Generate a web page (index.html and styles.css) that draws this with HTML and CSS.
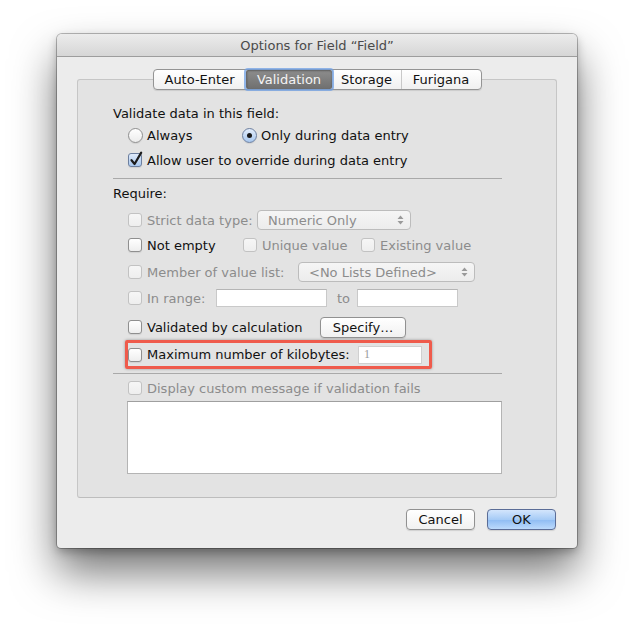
FILE: index.html
```html
<!DOCTYPE html>
<html>
<head>
<meta charset="utf-8">
<link rel="stylesheet" href="styles.css">
</head>
<body>
<div class="page">
  <div class="window">
    <div class="titlebar">Options for Field “Field”</div>
    <div class="body">
      <div class="tabs">
        <div class="seg">
          <span class="tab w1">Auto-Enter</span><span class="tab w2 sel">Validation</span><span class="tab w3">Storage</span><span class="tab w4">Furigana</span>
        </div>
      </div>
      <div class="group">
        <div class="row">Validate data in this field:</div>
        <div class="row ind r2">
          <span class="opt o-always"><span class="rb"></span>Always</span>
          <span class="opt"><span class="rb on"><span class="dot"></span></span>Only during data entry</span>
        </div>
        <div class="row ind r3">
          <span class="cb on"><svg class="check" width="14" height="16" viewBox="0 0 14 16"><path d="M2.5 9.2 L5.6 13 L12.2 1.6" fill="none" stroke="#1d1d1d" stroke-width="2.2" stroke-linecap="round" stroke-linejoin="round"/></svg></span>Allow user to override during data entry
        </div>
        <div class="sep s1"></div>
        <div class="row r-req">Require:</div>
        <div class="row ind r-strict dis">
          <span class="opt o-strict"><span class="cb dis"></span>Strict data type:</span>
          <span class="popup p-strict"><span>Numeric Only</span><svg class="arr" width="7" height="10" viewBox="0 0 7 10"><path d="M3.5 0.5 L6.5 4 L0.5 4Z M3.5 9.5 L6.5 6 L0.5 6Z" fill="#9a9a9a"/></svg></span>
        </div>
        <div class="row ind r-empty">
          <span class="opt o-empty"><span class="cb"></span>Not empty</span>
          <span class="opt o-unique dis"><span class="cb dis"></span>Unique value</span>
          <span class="opt dis"><span class="cb dis"></span>Existing value</span>
        </div>
        <div class="row ind r-member dis">
          <span class="opt o-member"><span class="cb dis"></span>Member of value list:</span>
          <span class="popup p-member"><span>&lt;No Lists Defined&gt;</span><svg class="arr" width="7" height="10" viewBox="0 0 7 10"><path d="M3.5 0.5 L6.5 4 L0.5 4Z M3.5 9.5 L6.5 6 L0.5 6Z" fill="#9a9a9a"/></svg></span>
        </div>
        <div class="row ind r-range dis">
          <span class="opt o-range"><span class="cb dis"></span>In range:</span>
          <span class="field f-range"></span>
          <span class="to">to</span>
          <span class="field f-range2"></span>
        </div>
        <div class="row ind r-calc">
          <span class="opt o-calc"><span class="cb"></span>Validated by calculation</span>
          <span class="btn b-spec">Specify…</span>
        </div>
        <div class="hl">
          <div class="row r-max">
            <span class="opt o-max"><span class="cb"></span>Maximum number of kilobytes:</span>
            <span class="field f-max">1</span>
          </div>
        </div>
        <div class="sep s2"></div>
        <div class="row ind r-disp dis">
          <span class="opt"><span class="cb dis"></span>Display custom message if validation fails</span>
        </div>
        <div class="textarea"></div>
      </div>
      <div class="buttons">
        <span class="btn b-cancel">Cancel</span>
        <span class="btn b-ok">OK</span>
      </div>
    </div>
  </div>
</div>
</body>
</html>
```

FILE: styles.css
```css
html, body {
  margin: 0;
  padding: 0;
  background: #ffffff;
}
body {
  font-family: "DejaVu Sans", sans-serif;
  font-size: 13px;
  color: #111;
}
.page {
  padding: 34px 0 0 57px;
  height: 628px;
  box-sizing: border-box;
}
.window {
  width: 520px;
  height: 514px;
  box-sizing: border-box;
  background: #ececec;
  border-radius: 5px 5px 4px 4px;
  box-shadow: 0 0 0 1px rgba(0,0,0,0.26), 0 24px 44px rgba(0,0,0,0.55), 0 4px 10px rgba(0,0,0,0.25);
  overflow: hidden;
}
.titlebar {
  height: 23px;
  box-sizing: border-box;
  background: linear-gradient(#ececec, #d6d6d6);
  border-bottom: 1px solid #9d9d9d;
  text-align: center;
  line-height: 23px;
  color: #4a4a4a;
  font-size: 13px;
}
.body {
  padding-top: 12px;
}
.tabs {
  display: flex;
  justify-content: center;
  position: relative;
  z-index: 1;
  margin-bottom: -11px;
}
.seg {
  display: flex;
  height: 21px;
  box-sizing: border-box;
  border: 1px solid #949494;
  border-radius: 4px;
  background: linear-gradient(#ffffff, #f0f0f0);
  box-shadow: 0 1px 1px rgba(0,0,0,0.1);
}
.tab {
  display: flex;
  align-items: center;
  justify-content: center;
  height: 19px;
  border-left: 1px solid #c9c9c9;
  color: #111;
}
.tab.w1 { width: 92px; border-left: none; border-radius: 3px 0 0 3px; }
.tab.w2 { width: 85px; }
.tab.w3 { width: 68px; }
.tab.w4 { width: 79px; border-radius: 0 3px 3px 0; }
.tab.sel {
  background: linear-gradient(#8e8e8e, #6f6f6f);
  color: #f4f4f4;
  border-left-color: #6a6a6a;
  box-shadow: inset 0 1px 2px rgba(0,0,0,0.35), 0 0 0 2px rgba(112,160,228,0.75);
  border-radius: 2px;
  position: relative;
}
.group {
  margin: 0 20px;
  height: 419px;
  box-sizing: border-box;
  border: 1px solid #c6c6c6;
  border-bottom-color: #bdbdbd;
  border-radius: 3px;
  background: #e3e3e3;
  padding: 23px 54px 0 35px;
}
.row {
  display: flex;
  align-items: center;
  height: 20px;
  white-space: nowrap;
}
.ind { padding-left: 15px; }
.r2 { margin-top: 2px; }
.r3 { margin-top: 5px; }
.sep {
  height: 1px;
  background: #a9a9a9;
}
.s1 { margin-top: 8px; }
.r-req { margin-top: 4px; }
.r-strict { margin-top: 7px; }
.r-empty { margin-top: 5px; }
.r-member { margin-top: 7px; }
.r-range { margin-top: 6px; }
.r-calc { margin-top: 9px; }
.opt {
  display: flex;
  align-items: center;
}
.dis { color: #8c8c8c; }
.r-calc, .r-empty .o-empty, .r-max { color: #111; }
.o-always { width: 114px; }
.o-strict { width: 129px; }
.o-empty { width: 115px; }
.o-unique { width: 118px; }
.o-member { width: 170px; }
.o-range { width: 88px; }
.o-calc { width: 192px; }
.o-max { width: 230px; }
.cb {
  width: 14px;
  height: 14px;
  box-sizing: border-box;
  border: 1px solid #8f8f8f;
  border-radius: 3px;
  background: linear-gradient(#ffffff, #eeeeee);
  box-shadow: 0 1px 1px rgba(0,0,0,0.08);
  margin-right: 5px;
  flex: none;
  position: relative;
}
.cb.dis {
  border-color: #c2c2c2;
  background: linear-gradient(#f6f6f6, #eeeeee);
  box-shadow: none;
}
.cb.on {
  border-color: #6c7f9f;
  background: linear-gradient(#dfeafa, #a9c8ef);
}
.check {
  position: absolute;
  left: 0;
  top: -3px;
}
.rb {
  width: 15px;
  height: 15px;
  box-sizing: border-box;
  border: 1px solid #8f8f8f;
  border-radius: 50%;
  background: linear-gradient(#ffffff, #ececec);
  box-shadow: 0 1px 1px rgba(0,0,0,0.08);
  margin-right: 4px;
  flex: none;
  display: flex;
  align-items: center;
  justify-content: center;
}
.rb.on {
  border-color: #6c7f9f;
  background: linear-gradient(#e3edfb, #a8c7ee);
}
.dot {
  width: 5px;
  height: 5px;
  border-radius: 50%;
  background: #1a1a1a;
}
.popup {
  height: 20px;
  box-sizing: border-box;
  border: 1px solid #bcbcbc;
  border-radius: 4px;
  background: linear-gradient(#f5f5f5, #ececec);
  display: flex;
  align-items: center;
  justify-content: space-between;
  padding: 0 6px 0 10px;
  color: #8c8c8c;
}
.p-strict { width: 154px; }
.p-member { width: 177px; }
.field {
  height: 18px;
  box-sizing: border-box;
  background: #fff;
  border: 1px solid #c9c9c9;
  border-top-color: #b5b5b5;
}
.f-range { width: 111px; }
.to { width: 20px; padding-left: 10px; }
.f-range2 { width: 101px; }
.btn {
  display: flex;
  align-items: center;
  justify-content: center;
  height: 21px;
  box-sizing: border-box;
  border: 1px solid #919191;
  border-radius: 4px;
  background: linear-gradient(#ffffff, #f1f1f1);
  box-shadow: 0 1px 1px rgba(0,0,0,0.12);
  color: #111;
}
.b-spec { width: 86px; }
.hl {
  margin: 3px 0 0 12px;
  width: 307px;
  height: 29px;
  box-sizing: border-box;
  border: 3px solid #ef5b4c;
  border-radius: 2px;
  box-shadow: 0 0 3px rgba(0,0,0,0.35);
  display: flex;
  align-items: center;
}
.r-max { height: 23px; }
.f-max {
  width: 64px;
  height: 18px;
  font-family: "Liberation Serif", serif;
  font-size: 12px;
  color: #9a9a9a;
  padding-left: 5px;
  display: flex;
  align-items: center;
  border-color: #d0d0d0;
}
.s2 { margin-top: 4px; }
.r-disp { margin-top: 4px; }
.textarea {
  margin: 3px 0 0 14px;
  width: 375px;
  height: 73px;
  box-sizing: border-box;
  background: #fff;
  border: 1px solid #b4b4b4;
  border-top-color: #9f9f9f;
}
.buttons {
  display: flex;
  justify-content: flex-end;
  gap: 12px;
  padding: 11px 21px 0 0;
}
.b-cancel { width: 69px; }
.b-ok {
  width: 69px;
  border-color: #5b6d97;
  background: linear-gradient(#d3e5fc, #a6cbf6 50%, #8fbcf3 52%, #bcdafc);
}
```
